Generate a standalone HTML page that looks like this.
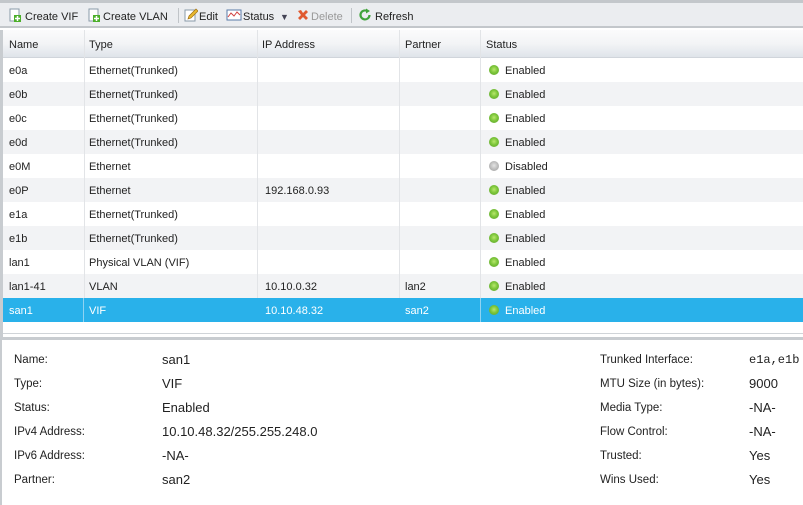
<!DOCTYPE html>
<html><head><style>
*{margin:0;padding:0;box-sizing:border-box}
body{width:803px;height:505px;overflow:hidden;background:#fff;font-family:"Liberation Sans",Tahoma,sans-serif;font-size:11px;color:#222;position:relative}
.top{position:absolute;left:0;top:0;width:803px;height:3px;background:#c3c7cb}
.tb{position:absolute;left:0;top:3px;width:803px;height:25px;background:#ebedf0;border-bottom:2px solid #c3c7cb}
.tb span{position:absolute;top:8px;font-size:11px}
.ic{position:absolute;top:5px;width:14px;height:14px}
.sep{position:absolute;top:5px;width:1px;height:15px;background:#c0c4c8}
.hd{position:absolute;left:0;top:30px;width:803px;height:28px;background:linear-gradient(#fbfbfc,#f3f4f6 50%,#dfe4ea);border-bottom:1px solid #d0d5db}
.hd span{position:absolute;top:9px}
.row{position:absolute;left:3px;width:800px;height:24px}
.row span{position:absolute;top:7px}
.vl{position:absolute;top:30px;width:1px;height:292px;background:#e2e4e7}
.dot{position:absolute;top:7px;width:10px;height:10px;border-radius:50%}
.g{background:radial-gradient(circle at 50% 45%,#b8e86c 0,#7cc53a 45%,#5aa02a 100%)}
.gr{background:radial-gradient(circle at 50% 45%,#e4e4e4 0,#bdbdbd 50%,#999 100%)}
.d{position:absolute;font-size:11.5px}
.v{position:absolute;font-size:13px}
</style></head><body>
<div class="top"></div>
<div class="tb">
<svg class="ic" style="left:8px" viewBox="0 0 14 14"><rect x="2" y="1" width="9" height="12" fill="#fff" stroke="#8a9aa8"/><rect x="6" y="7" width="7" height="7" fill="#4caf2a"/><path d="M9.5 8v5M7 10.5h5" stroke="#fff" stroke-width="1.5"/></svg>
<span style="left:25px">Create VIF</span>
<svg class="ic" style="left:87px" viewBox="0 0 14 14"><rect x="2" y="1" width="9" height="12" fill="#fff" stroke="#8a9aa8"/><rect x="6" y="7" width="7" height="7" fill="#4caf2a"/><path d="M9.5 8v5M7 10.5h5" stroke="#fff" stroke-width="1.5"/></svg>
<span style="left:103px">Create VLAN</span>
<div class="sep" style="left:178px"></div>
<svg class="ic" style="left:184px" viewBox="0 0 14 14"><rect x="1" y="2" width="10" height="11" fill="#fff" stroke="#8a9aa8"/><path d="M4 11l1-3 7-7 2 2-7 7z" fill="#e8b830" stroke="#a07010" stroke-width=".7"/></svg>
<span style="left:199px">Edit</span>
<svg class="ic" style="left:226px;width:16px" viewBox="0 0 16 14"><rect x="1" y="2" width="14" height="10" fill="#fff" stroke="#5a7aa8"/><path d="M2 9l3-4 3 3 3-4 3 3" fill="none" stroke="#d04040"/></svg>
<span style="left:243px">Status</span>
<span style="left:280px;top:9px;font-size:9px;color:#445">▼</span>
<svg class="ic" style="left:296px" viewBox="0 0 14 14"><path d="M2 3l3-1 2 3 3-3 2 2-3 3 3 3-2 2-3-3-3 3-2-2 3-3z" fill="#e05a30"/></svg>
<span style="left:311px;color:#999">Delete</span>
<div class="sep" style="left:351px"></div>
<svg class="ic" style="left:358px" viewBox="0 0 14 14"><path d="M11.5 7A4.5 4.5 0 1 1 9.5 3.2" fill="none" stroke="#3fa33a" stroke-width="2.2"/><path d="M8 0.5l4 2.5-4 2.5z" fill="#3fa33a"/></svg>
<span style="left:375px">Refresh</span>
</div>
<div class="hd"><span style="left:9px">Name</span><span style="left:89px">Type</span><span style="left:262px">IP Address</span><span style="left:405px">Partner</span><span style="left:486px">Status</span></div>
<div style="position:absolute;left:0;top:30px;width:3px;height:310px;background:#c8ccd0"></div>
<div style="position:absolute;left:0;top:340px;width:2px;height:165px;background:#c8ccd0"></div>

<div class="row" style="top:58px;background:#fff"><span style="left:6px">e0a</span><span style="left:86px">Ethernet(Trunked)</span><div class="dot g" style="left:486px"></div><span style="left:502px">Enabled</span></div>
<div class="row" style="top:82px;background:#f2f3f5"><span style="left:6px">e0b</span><span style="left:86px">Ethernet(Trunked)</span><div class="dot g" style="left:486px"></div><span style="left:502px">Enabled</span></div>
<div class="row" style="top:106px;background:#fff"><span style="left:6px">e0c</span><span style="left:86px">Ethernet(Trunked)</span><div class="dot g" style="left:486px"></div><span style="left:502px">Enabled</span></div>
<div class="row" style="top:130px;background:#f2f3f5"><span style="left:6px">e0d</span><span style="left:86px">Ethernet(Trunked)</span><div class="dot g" style="left:486px"></div><span style="left:502px">Enabled</span></div>
<div class="row" style="top:154px;background:#fff"><span style="left:6px">e0M</span><span style="left:86px">Ethernet</span><div class="dot gr" style="left:486px"></div><span style="left:502px">Disabled</span></div>
<div class="row" style="top:178px;background:#f2f3f5"><span style="left:6px">e0P</span><span style="left:86px">Ethernet</span><span style="left:262px">192.168.0.93</span><div class="dot g" style="left:486px"></div><span style="left:502px">Enabled</span></div>
<div class="row" style="top:202px;background:#fff"><span style="left:6px">e1a</span><span style="left:86px">Ethernet(Trunked)</span><div class="dot g" style="left:486px"></div><span style="left:502px">Enabled</span></div>
<div class="row" style="top:226px;background:#f2f3f5"><span style="left:6px">e1b</span><span style="left:86px">Ethernet(Trunked)</span><div class="dot g" style="left:486px"></div><span style="left:502px">Enabled</span></div>
<div class="row" style="top:250px;background:#fff"><span style="left:6px">lan1</span><span style="left:86px">Physical VLAN (VIF)</span><div class="dot g" style="left:486px"></div><span style="left:502px">Enabled</span></div>
<div class="row" style="top:274px;background:#f2f3f5"><span style="left:6px">lan1-41</span><span style="left:86px">VLAN</span><span style="left:262px">10.10.0.32</span><span style="left:402px">lan2</span><div class="dot g" style="left:486px"></div><span style="left:502px">Enabled</span></div>
<div class="vl" style="left:84px"></div><div class="vl" style="left:257px"></div><div class="vl" style="left:399px"></div><div class="vl" style="left:480px"></div>
<div class="row" style="top:298px;background:#29b1ea;color:#fff"><span style="left:6px">san1</span><span style="left:86px">VIF</span><span style="left:262px">10.10.48.32</span><span style="left:402px">san2</span><div class="dot g" style="left:486px"></div><span style="left:502px">Enabled</span><div style="position:absolute;left:80px;top:0;width:1px;height:24px;background:#8fd3f2"></div><div style="position:absolute;left:477px;top:0;width:1px;height:24px;background:#8fd3f2"></div></div>
<div style="position:absolute;left:3px;top:333px;width:800px;height:1px;background:#d0d4d8"></div>
<div style="position:absolute;left:2px;top:337px;width:801px;height:3px;background:#c8ccd0"></div>

<div class="d" style="left:14px;top:354px">Name:</div><div class="v" style="left:162px;top:352px">san1</div>
<div class="d" style="left:14px;top:378px">Type:</div><div class="v" style="left:162px;top:376px">VIF</div>
<div class="d" style="left:14px;top:402px">Status:</div><div class="v" style="left:162px;top:400px">Enabled</div>
<div class="d" style="left:14px;top:426px">IPv4 Address:</div><div class="v" style="left:162px;top:424px">10.10.48.32/255.255.248.0</div>
<div class="d" style="left:14px;top:450px">IPv6 Address:</div><div class="v" style="left:162px;top:448px">-NA-</div>
<div class="d" style="left:14px;top:474px">Partner:</div><div class="v" style="left:162px;top:472px">san2</div>
<div class="d" style="left:600px;top:354px">Trunked Interface:</div><div class="v" style="left:749px;top:353px;font-family:'Liberation Mono',monospace;font-size:12px">e1a,e1b</div>
<div class="d" style="left:600px;top:378px">MTU Size (in bytes):</div><div class="v" style="left:749px;top:376px">9000</div>
<div class="d" style="left:600px;top:402px">Media Type:</div><div class="v" style="left:749px;top:400px">-NA-</div>
<div class="d" style="left:600px;top:426px">Flow Control:</div><div class="v" style="left:749px;top:424px">-NA-</div>
<div class="d" style="left:600px;top:450px">Trusted:</div><div class="v" style="left:749px;top:448px">Yes</div>
<div class="d" style="left:600px;top:474px">Wins Used:</div><div class="v" style="left:749px;top:472px">Yes</div>
</body></html>
